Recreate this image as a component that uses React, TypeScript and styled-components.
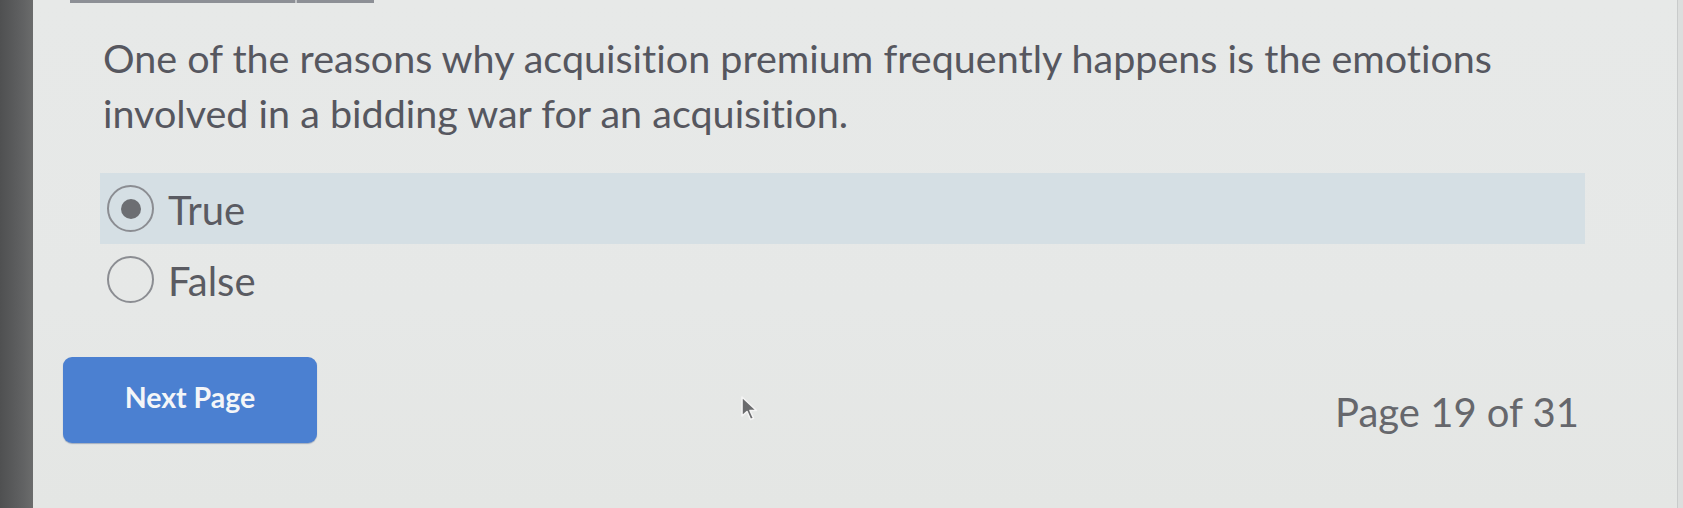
import styled, {createGlobalStyle} from 'styled-components';

const GlobalStyle = createGlobalStyle`
  html, body {
    margin: 0;
    padding: 0;
    background: #e6e8e7;
  }
  body {
    font-family: Lato, "Open Sans", "Liberation Sans", sans-serif;
    font-variant-ligatures: none;
    width: 1683px;
    height: 508px;
    overflow: hidden;
  }
`;

const Screen = styled.div`
  display: flex;
  width: 1683px;
  height: 508px;
  position: relative;
`;

const Bezel = styled.div`
  width: 33px;
  flex-shrink: 0;
  background: linear-gradient(90deg, #4f5051 0%, #616263 70%, #6b6c6c 100%);
`;

const RightEdge = styled.div`
  width: 5px;
  flex-shrink: 0;
  border-left: 1px solid #c9cbcb;
  background: #dcdedd;
`;

const Page = styled.main`
  flex: 1;
  display: flex;
  flex-direction: column;
  background: linear-gradient(180deg, #e7e9e8 0%, #e6e8e7 60%, #e4e6e4 100%);
`;

const TopTabs = styled.div`
  display: flex;
  margin-left: 37px;
  height: 3px;
`;

const TabEdge = styled.div<{$w: number}>`
  width: ${p => p.$w}px;
  height: 3px;
  background: #8d9096;
  & + & {
    border-left: 2px solid #c4c6c8;
  }
`;

const Question = styled.p`
  margin: 27px 80px 0 70px;
  font-size: 39.5px;
  line-height: 55px;
  color: #56575f;
  font-variant-ligatures: none;
`;

const Options = styled.div`
  display: flex;
  flex-direction: column;
  margin: 33px 92px 0 67px;
`;

const OptionRow = styled.label<{$selected?: boolean}>`
  display: flex;
  align-items: center;
  height: 71px;
  padding-left: 7px;
  background: ${p => (p.$selected ? '#d5dfe4' : 'transparent')};
  cursor: pointer;
`;

const Radio = styled.span<{$checked?: boolean}>`
  box-sizing: border-box;
  width: 47px;
  height: 47px;
  border-radius: 50%;
  border: 2.5px solid #8b8d92;
  display: flex;
  align-items: center;
  justify-content: center;
  flex-shrink: 0;
  background: transparent;

  &::after {
    content: '';
    display: ${p => (p.$checked ? 'block' : 'none')};
    width: 20px;
    height: 20px;
    border-radius: 50%;
    background: #6c6e72;
  }
`;

const OptionText = styled.span`
  margin-left: 14px;
  font-size: 40px;
  color: #5a5b62;
  padding-top: 2px;
`;

const Footer = styled.div`
  display: flex;
  align-items: flex-start;
  justify-content: space-between;
  margin: 42px 98px 0 30px;
`;

const NextButton = styled.button`
  width: 254px;
  height: 86px;
  border: none;
  border-radius: 9px;
  background: #4b80d1;
  color: #f4f6f8;
  font-family: Lato, "Open Sans", "Liberation Sans", sans-serif;
  font-weight: 700;
  font-size: 28.5px;
  padding: 0 0 6px;
  cursor: pointer;
  box-shadow: 0 1px 1px rgba(40, 70, 120, 0.35);
`;

const PageCount = styled.span`
  margin-top: 31px;
  font-size: 40px;
  color: #66676c;
`;

const Pointer = styled.svg`
  position: absolute;
  left: 740px;
  top: 396px;
  width: 20px;
  height: 28px;
`;

const App = () => (
  <>
    <GlobalStyle />
    <Screen>
      <Bezel />
      <Page>
        <TopTabs>
          <TabEdge $w={225} />
          <TabEdge $w={77} />
        </TopTabs>
        <Question>
          One of the reasons why acquisition premium frequently happens is the emotions involved in a
          bidding war for an acquisition.
        </Question>
        <Options>
          <OptionRow $selected>
            <Radio $checked />
            <OptionText>True</OptionText>
          </OptionRow>
          <OptionRow>
            <Radio />
            <OptionText>False</OptionText>
          </OptionRow>
        </Options>
        <Footer>
          <NextButton>Next Page</NextButton>
          <PageCount>Page 19 of 31</PageCount>
        </Footer>
      </Page>
      <RightEdge />
      <Pointer viewBox="0 0 20 28">
        <path
          d="M2 1 L2 20 L7 15.5 L10.5 23.5 L13.5 22.2 L10 14.5 L16.5 14.5 Z"
          fill="#6a6b6d"
          stroke="#f4f4f4"
          strokeWidth="1.6"
          strokeLinejoin="round"
        />
      </Pointer>
    </Screen>
  </>
);

export default App;
